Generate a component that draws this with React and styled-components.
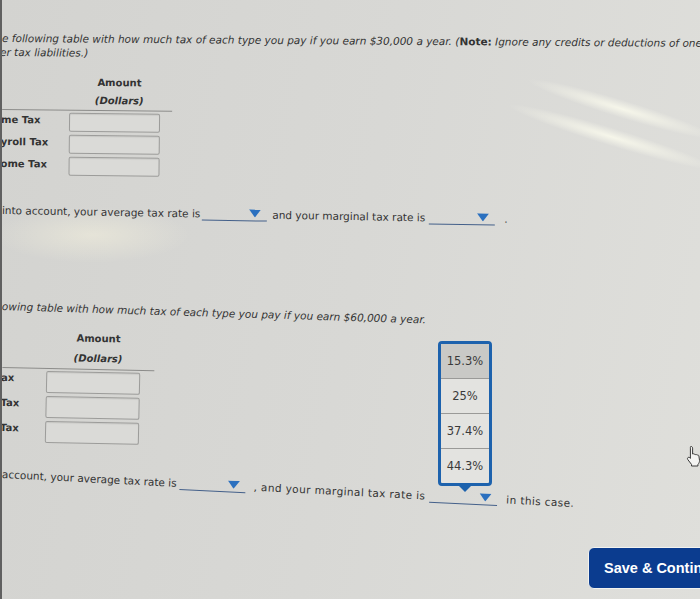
import React from 'react';
import styled, { createGlobalStyle } from 'styled-components';

const Global = createGlobalStyle`
  html, body { margin: 0; padding: 0; }
  body {
    width: 700px;
    height: 599px;
    overflow: hidden;
    background: #d6d6d3;
    font-family: "DejaVu Sans", Verdana, sans-serif;
  }
`;

const Page = styled.div`
  position: relative;
  width: 700px;
  height: 599px;
  box-sizing: border-box;
  overflow: hidden;
  border-left: 2px solid #606060;
  padding-top: 31px;
  color: #333333;
  font-size: 10.5px;
  background:
    radial-gradient(ellipse 140px 40px at 90px 235px, rgba(255,250,225,0.4), transparent 70%),
    linear-gradient(100deg, #d3d3d0 0%, #d8d8d5 50%, #dfdfdb 100%);
`;

const Glare = styled.div`
  position: absolute;
  left: ${p => p.$x}px;
  top: ${p => p.$y}px;
  width: ${p => p.$w}px;
  height: ${p => p.$h}px;
  border-radius: 50%;
  background: radial-gradient(ellipse at center, rgba(255,255,240,0.75), rgba(255,255,240,0) 70%);
  transform: rotate(${p => p.$r}deg);
  pointer-events: none;
`;

const Block = styled.div`
  margin-top: ${p => p.$top || 0}px;
  transform: rotate(${p => p.$tilt || 0}deg);
  transform-origin: 0 50%;
`;

const Line = styled.div`
  white-space: nowrap;
  line-height: 14px;
  font-style: italic;
  font-size: ${p => p.$size || 10.5}px;
  margin-left: ${p => p.$shift || 0}px;
  b { font-style: normal; font-weight: bold; }
`;

const TaxTable = styled.div`
  width: ${p => p.$rule}px;
  --label: ${p => p.$label}px;
  --input: ${p => p.$input}px;
`;

const Head = styled.div`
  display: grid;
  grid-template-columns: var(--label) var(--input);
  border-bottom: 1px solid #8c8c8a;
`;

const HeadCell = styled.div`
  display: flex;
  flex-direction: column;
  align-items: center;
  font-weight: bold;
  font-size: 10px;
  line-height: ${p => p.$lh}px;
  padding-left: 9px;
  i { font-style: italic; }
`;

const Row = styled.div`
  display: grid;
  grid-template-columns: var(--label) var(--input);
  align-items: center;
  height: ${p => p.$h}px;
`;

const Label = styled.div`
  font-weight: bold;
  font-size: 10px;
  white-space: nowrap;
  margin-left: -1px;
  margin-top: ${p => p.$lift || 0}px;
`;

const Field = styled.input`
  box-sizing: border-box;
  width: var(--input);
  height: ${p => p.$h}px;
  border: 1px solid #9c9c9a;
  border-radius: 2px;
  background: #dadad7;
  box-shadow: inset 0 1px 1px rgba(0,0,0,0.08);
  padding: 0;
  margin: 0;
`;

const Sentence = styled.div`
  display: flex;
  align-items: flex-end;
  white-space: nowrap;
  line-height: 14px;
  margin-top: ${p => p.$top || 0}px;
  transform: rotate(${p => p.$tilt || 0}deg);
  transform-origin: 0 50%;
`;

const Words = styled.span`
  letter-spacing: ${p => p.$track || 0}px;
  margin-left: ${p => p.$gap || 0}px;
`;

const Select = styled.span`
  display: inline-flex;
  justify-content: flex-end;
  align-items: center;
  box-sizing: border-box;
  width: ${p => p.$w}px;
  height: 15px;
  padding-right: 6px;
  border-bottom: 1px solid #44608a;
  margin-left: ${p => p.$gap || 3}px;
`;

const Caret = () => (
  <svg width="12" height="8" viewBox="0 0 12 8">
    <path d="M0 0 H12 L6 8 Z" fill="#2b70bf" />
  </svg>
);

const Popup = styled.div`
  position: absolute;
  left: 436px;
  top: 341px;
  width: 54px;
  box-sizing: border-box;
  border: 3px solid #1d62ad;
  border-radius: 4px;
  background: #e3e3e0;
  font-size: 11.5px;
  color: #3a3a3a;
  &::after {
    content: "";
    position: absolute;
    left: 50%;
    bottom: -9px;
    transform: translateX(-50%);
    border-left: 7px solid transparent;
    border-right: 7px solid transparent;
    border-top: 7px solid #1d62ad;
  }
`;

const Option = styled.div`
  height: 34px;
  display: flex;
  align-items: center;
  justify-content: center;
  background: ${p => (p.$active ? '#c9c9c6' : 'transparent')};
  border-top: ${p => (p.$first ? 'none' : '1px solid #9a9a98')};
`;

const Footer = styled.div`
  display: flex;
  padding-left: 586px;
  margin-top: ${p => p.$top}px;
`;

const SaveButton = styled.button`
  flex: none;
  height: 42px;
  padding: 0 15px;
  border: 1px solid #f2f2ef;
  border-radius: 6px;
  background: #0b3c8f;
  color: #fff;
  font-family: "Liberation Sans", Arial, sans-serif;
  font-weight: bold;
  font-size: 14.5px;
  white-space: nowrap;
  text-align: left;
`;

const Pointer = styled.svg`
  position: absolute;
  left: 684px;
  top: 445px;
`;

const rows1 = ['me Tax', 'yroll Tax', 'ome Tax'];
const rows2 = ['ax', 'Tax', 'Tax'];

export default function App() {
  return (
    <>
      <Global />
      <Page>
        <Block $tilt={0.4}>
          <Line>
            e following table with how much tax of each type you pay if you earn $30,000 a year. (<b>Note:</b> Ignore any credits or deductions of one
          </Line>
          <Line $shift={-2}>er tax liabilities.)</Line>
        </Block>

        <Block $top={14} $tilt={0.6}>
          <TaxTable $label={67} $input={91} $rule={170}>
            <Head>
              <span />
              <HeadCell $lh={18}>
                <span>Amount</span>
                <i>(Dollars)</i>
              </HeadCell>
            </Head>
            {rows1.map((r, i) => (
              <Row key={i} $h={22}>
                <Label $lift={-3}>{r}</Label>
                <Field readOnly $h={19} />
              </Row>
            ))}
          </TaxTable>
        </Block>

        <Sentence $top={26} $tilt={1}>
          <Words>into account, your average tax rate is</Words>
          <Select $w={65} $gap={2}><Caret /></Select>
          <Words $gap={5}>and your marginal tax rate is</Words>
          <Select $w={66} $gap={4}><Caret /></Select>
          <Words $gap={9}>.</Words>
        </Sentence>

        <Block $top={82} $tilt={1.8}>
          <Line>owing table with how much tax of each type you pay if you earn $60,000 a year.</Line>
        </Block>

        <Block $top={14} $tilt={1.2}>
          <TaxTable $label={44} $input={94} $rule={152}>
            <Head>
              <span />
              <HeadCell $lh={20}>
                <span>Amount</span>
                <i>(Dollars)</i>
              </HeadCell>
            </Head>
            {rows2.map((r, i) => (
              <Row key={i} $h={25}>
                <Label $lift={-6}>{r}</Label>
                <Field readOnly $h={22} />
              </Row>
            ))}
          </TaxTable>
        </Block>

        <Sentence $top={23} $tilt={2.9}>
          <Words>account, your average tax rate is</Words>
          <Select $w={66} $gap={3}><Caret /></Select>
          <Words $gap={8} $track={0.4}>, and your marginal tax rate is</Words>
          <Select $w={68} $gap={4}><Caret /></Select>
          <Words $gap={9} $track={0.4}>in this case.</Words>
        </Sentence>

        <Footer $top={66}>
          <SaveButton>Save &amp; Continue</SaveButton>
        </Footer>

        <Popup>
          <Option $active $first>15.3%</Option>
          <Option>25%</Option>
          <Option>37.4%</Option>
          <Option>44.3%</Option>
        </Popup>

        <Glare $x={520} $y={100} $w={200} $h={18} $r={17} />
        <Glare $x={500} $y={128} $w={220} $h={18} $r={17} />

        <Pointer width="16" height="22" viewBox="0 0 16 22">
          <path
            d="M5 1.5c1 0 1.6.7 1.6 1.6V9l1-.2c.8 0 1.3.4 1.5 1 .5-.4 1.5-.4 2 .3.6-.3 1.6 0 1.8.8l.6 4.5c.1 1.5-.6 3-1.6 4.2V21H5.5v-1.6L1.8 14.6c-.6-.8-.4-1.8.4-2.2.6-.3 1.3-.1 1.7.4l.5.6V3.1C4.4 2.2 4.2 1.5 5 1.5z"
            fill="#f4f4f2"
            stroke="#3a3a3a"
            strokeWidth="1"
          />
        </Pointer>
      </Page>
    </>
  );
}
